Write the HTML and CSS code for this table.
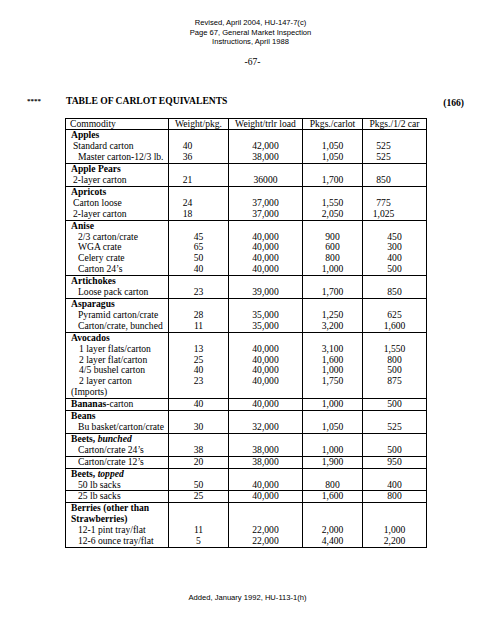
FILE: index.html
```html
<!DOCTYPE html>
<html>
<head>
<meta charset="utf-8">
<link rel="stylesheet" href="styles.css">
</head>
<body>
<div class="page">
  <div class="running-head">
    <div>Revised, April 2004, HU-147-7(c)</div>
    <div>Page 67, General Market Inspection</div>
    <div>Instructions, April 1988</div>
  </div>
  <div class="page-no">-67-</div>
  <div class="title-row">
    <span class="stars">****</span>
    <span class="title">TABLE OF CARLOT EQUIVALENTS</span>
    <span class="ref">(166)</span>
  </div>
  <table class="carlot">
    <colgroup>
      <col class="c1"><col class="c2"><col class="c3"><col class="c4"><col class="c5">
    </colgroup>
    <tr class="g hdr"><td class="name">Commodity</td><td>Weight/pkg.</td><td>Weight/trlr load</td><td>Pkgs./carlot</td><td>Pkgs./1/2 car</td></tr>

    <tr class="g"><td class="name b">Apples</td><td></td><td></td><td></td><td></td></tr>
    <tr><td class="name in-a">Standard carton</td><td class="sh">40</td><td>42,000</td><td>1,050</td><td class="sh">525</td></tr>
    <tr><td class="name in">Master carton-12/3 lb.</td><td class="sh">36</td><td>38,000</td><td>1,050</td><td class="sh">525</td></tr>

    <tr class="g"><td class="name b">Apple Pears</td><td></td><td></td><td></td><td></td></tr>
    <tr><td class="name in-b">2-layer carton</td><td class="sh">21</td><td>36000</td><td>1,700</td><td class="sh">850</td></tr>

    <tr class="g"><td class="name b">Apricots</td><td></td><td></td><td></td><td></td></tr>
    <tr><td class="name in-a">Carton loose</td><td class="sh">24</td><td>37,000</td><td>1,550</td><td class="sh">775</td></tr>
    <tr><td class="name in-b">2-layer carton</td><td class="sh">18</td><td>37,000</td><td>2,050</td><td class="sh">1,025</td></tr>

    <tr class="g"><td class="name b">Anise</td><td></td><td></td><td></td><td></td></tr>
    <tr><td class="name in">2/3 carton/crate</td><td>45</td><td>40,000</td><td>900</td><td>450</td></tr>
    <tr><td class="name in">WGA crate</td><td>65</td><td>40,000</td><td>600</td><td>300</td></tr>
    <tr><td class="name in">Celery crate</td><td>50</td><td>40,000</td><td>800</td><td>400</td></tr>
    <tr><td class="name in">Carton 24’s</td><td>40</td><td>40,000</td><td>1,000</td><td>500</td></tr>

    <tr class="g"><td class="name b">Artichokes</td><td></td><td></td><td></td><td></td></tr>
    <tr><td class="name in">Loose pack carton</td><td>23</td><td>39,000</td><td>1,700</td><td>850</td></tr>

    <tr class="g"><td class="name b">Asparagus</td><td></td><td></td><td></td><td></td></tr>
    <tr><td class="name in">Pyramid carton/crate</td><td>28</td><td>35,000</td><td>1,250</td><td>625</td></tr>
    <tr><td class="name in">Carton/crate, bunched</td><td>11</td><td>35,000</td><td>3,200</td><td>1,600</td></tr>

    <tr class="g"><td class="name b">Avocados</td><td></td><td></td><td></td><td></td></tr>
    <tr><td class="name in-c">1 layer flats/carton</td><td>13</td><td>40,000</td><td>3,100</td><td>1,550</td></tr>
    <tr><td class="name in-c">2 layer flat/carton</td><td>25</td><td>40,000</td><td>1,600</td><td>800</td></tr>
    <tr><td class="name in-c">4/5 bushel carton</td><td>40</td><td>40,000</td><td>1,000</td><td>500</td></tr>
    <tr><td class="name in-c">2 layer carton</td><td>23</td><td>40,000</td><td>1,750</td><td>875</td></tr>
    <tr><td class="name">(Imports)</td><td></td><td></td><td></td><td></td></tr>

    <tr class="g"><td class="name"><b>Bananas</b>-carton</td><td>40</td><td>40,000</td><td>1,000</td><td>500</td></tr>

    <tr class="g"><td class="name b">Beans</td><td></td><td></td><td></td><td></td></tr>
    <tr><td class="name in">Bu basket/carton/crate</td><td>30</td><td>32,000</td><td>1,050</td><td>525</td></tr>

    <tr class="g"><td class="name b">Beets, <i>bunched</i></td><td></td><td></td><td></td><td></td></tr>
    <tr><td class="name in">Carton/crate 24’s</td><td>38</td><td>38,000</td><td>1,000</td><td>500</td></tr>
    <tr class="g"><td class="name in">Carton/crate 12’s</td><td>20</td><td>38,000</td><td>1,900</td><td>950</td></tr>

    <tr class="g"><td class="name b">Beets, <i>topped</i></td><td></td><td></td><td></td><td></td></tr>
    <tr><td class="name in">50 lb sacks</td><td>50</td><td>40,000</td><td>800</td><td>400</td></tr>
    <tr class="g"><td class="name in">25 lb sacks</td><td>25</td><td>40,000</td><td>1,600</td><td>800</td></tr>

    <tr class="g"><td class="name b">Berries (other than</td><td></td><td></td><td></td><td></td></tr>
    <tr><td class="name b">Strawberries)</td><td></td><td></td><td></td><td></td></tr>
    <tr><td class="name in">12-1 pint tray/flat</td><td>11</td><td>22,000</td><td>2,000</td><td>1,000</td></tr>
    <tr class="last"><td class="name in">12-6 ounce tray/flat</td><td>5</td><td>22,000</td><td>4,400</td><td>2,200</td></tr>
  </table>
  <div class="foot">Added, January 1992, HU-113-1(h)</div>
</div>
</body>
</html>
```
FILE: styles.css
```css
html, body {
  margin: 0;
  padding: 0;
  background: #fff;
  color: #000;
}

.page {
  width: 495px;
  height: 640px;
  font-family: "Liberation Serif", "Times New Roman", serif;
  font-size: 9.6px;
  color: #000;
}

.running-head {
  font-family: "Liberation Sans", Arial, sans-serif;
  font-size: 7.6px;
  line-height: 9.5px;
  text-align: center;
  padding-top: 18px;
  padding-left: 6px;
}

.page-no {
  text-align: center;
  line-height: 11px;
  margin-top: 9px;
  padding-left: 10px;
}

.title-row {
  display: flex;
  align-items: flex-start;
  margin-top: 28px;
  line-height: 11px;
  font-weight: bold;
}

.stars {
  font-size: 7px;
  margin-left: 27px;
  width: 39px;
  padding-top: 1px;
}

.title {
  font-size: 9.6px;
}

.ref {
  margin-left: auto;
  margin-right: 31px;
  padding-top: 2px;
}

.carlot {
  margin-top: 10px;
  margin-left: 65px;
  border-collapse: collapse;
  table-layout: fixed;
  width: 362px;
  font-size: 9.6px;
  line-height: 10.9px;
}

.c1 { width: 103px; }
.c2 { width: 60px; }
.c3 { width: 74px; }
.c4 { width: 60px; }
.c5 { width: 64px; }

.carlot td {
  padding: 0;
  border-left: 1px solid #000;
  border-right: 1px solid #000;
  text-align: center;
  white-space: nowrap;
}

.carlot tr.g td {
  border-top: 1px solid #000;
}

.carlot tr.last td {
  border-bottom: 1px solid #000;
}

.carlot td.name {
  text-align: left;
  padding-left: 5px;
}

.carlot tr.hdr td.name {
  padding-left: 4px;
}

.carlot td.b,
.carlot td b {
  font-weight: bold;
}

.carlot td i {
  font-style: italic;
  font-weight: bold;
}

.carlot td.in { padding-left: 12px; }
.carlot td.in-a { padding-left: 7px; }
.carlot td.in-b { padding-left: 7px; }
.carlot td.in-c { padding-left: 13px; }

.carlot td.sh {
  padding-right: 22px;
}

.foot {
  font-family: "Liberation Sans", Arial, sans-serif;
  font-size: 7.6px;
  line-height: 9.5px;
  text-align: center;
  margin-top: 45px;
  color: #000;
}
```
